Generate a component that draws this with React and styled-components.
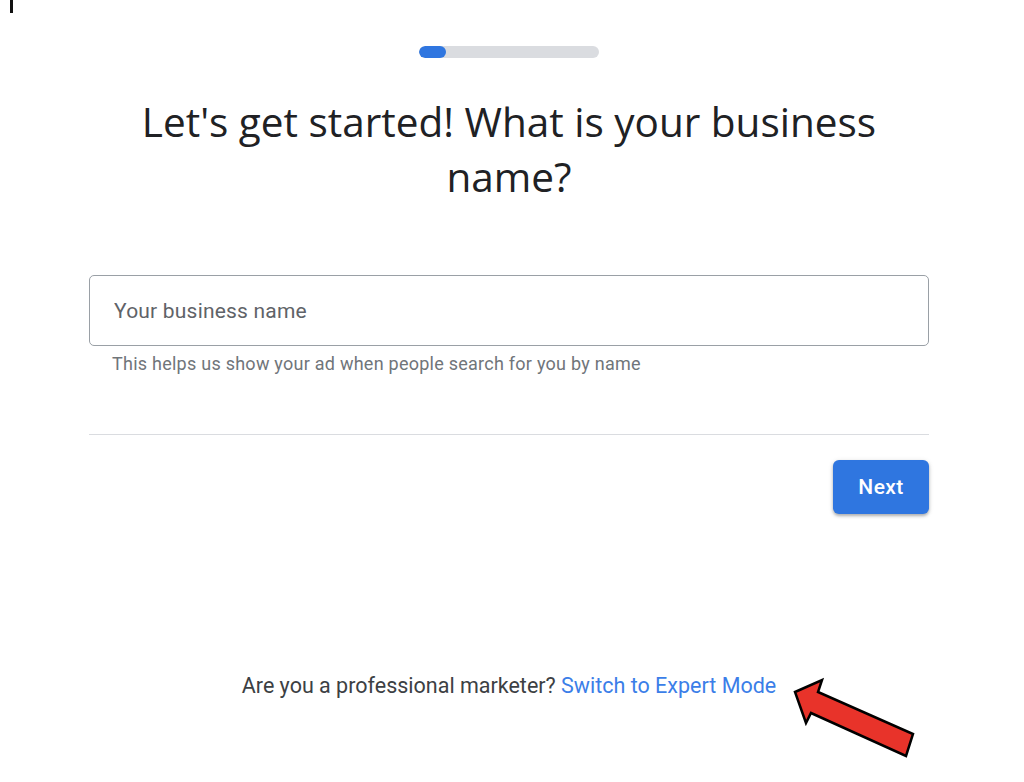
import React from 'react';
import styled, { createGlobalStyle } from 'styled-components';

const GlobalStyle = createGlobalStyle`
  body {
    margin: 0;
    background: #ffffff;
    font-family: Roboto, "Liberation Sans", sans-serif;
  }
`

const Page = styled.div`
  position: relative;
  width: 1024px;
  height: 782px;
  padding-right: 6px;
  box-sizing: border-box;
  overflow: hidden;
`

const Caret = styled.div`
  position: absolute;
  left: 10px;
  top: 0;
  width: 3px;
  height: 13px;
  background: #111;
`

const Main = styled.div`
  width: 840px;
  margin: 0 auto;
  padding-top: 46px;
  display: flex;
  flex-direction: column;
  align-items: center;
`

const Progress = styled.div`
  width: 180px;
  height: 12px;
  border-radius: 6px;
  background: #dadce0;
  overflow: hidden;
`

const ProgressFill = styled.div`
  height: 100%;
  border-radius: 6px;
  background: #2f76e0;
`

const Title = styled.h1`
  margin: 36px 0 0;
  width: 760px;
  text-align: center;
  font-family: "Open Sans", sans-serif;
  font-weight: 400;
  font-size: 40.5px;
  line-height: 55px;
  color: #202124;
`

const Field = styled.div`
  align-self: stretch;
  margin-top: 71px;
`

const Input = styled.input`
  display: block;
  width: 100%;
  height: 71px;
  box-sizing: border-box;
  border: 1.5px solid #9aa0a6;
  border-radius: 5px;
  padding: 0 24px;
  font-family: Roboto, sans-serif;
  font-size: 21px;
  letter-spacing: 0.2px;
  color: #202124;
  outline: none;

  &::placeholder {
    color: #5f6368;
  }
`

const Helper = styled.p`
  margin: 7px 0 0 23px;
  font-size: 18px;
  line-height: 22px;
  color: #70757a;
  letter-spacing: 0.25px;
`

const Divider = styled.hr`
  align-self: stretch;
  margin: 59px 0 0;
  border: none;
  border-top: 1.5px solid #dadce0;
`

const Actions = styled.div`
  align-self: stretch;
  display: flex;
  justify-content: flex-end;
  margin-top: 25px;
`

const Button = styled.button`
  width: 96px;
  height: 54px;
  border: none;
  border-radius: 6px;
  background: #2f76e0;
  color: #fff;
  font-family: Roboto, sans-serif;
  font-weight: 500;
  font-size: 21px;
  letter-spacing: 0.4px;
  box-shadow: 0 2px 3px rgba(60, 64, 67, 0.35), 0 1px 5px rgba(60, 64, 67, 0.15);
  cursor: pointer;
`

const Footer = styled.p`
  margin: 159px 0 0;
  font-size: 21.5px;
  line-height: 26px;
  color: #3c4043;
`

const Link = styled.a`
  color: #3b7ee8;
  text-decoration: none;
`

const Arrow = styled.svg`
  position: absolute;
  left: 0;
  top: 0;
  pointer-events: none;
`

function App() {
  return (
    <Page>
      <GlobalStyle />
      <Caret />
      <Main>
        <Progress>
          <ProgressFill style={{ width: '15%' }} />
        </Progress>
        <Title>Let's get started! What is your business name?</Title>
        <Field>
          <Input placeholder="Your business name" />
          <Helper>This helps us show your ad when people search for you by name</Helper>
        </Field>
        <Divider />
        <Actions>
          <Button>Next</Button>
        </Actions>
        <Footer>
          Are you a professional marketer? <Link href="#">Switch to Expert Mode</Link>
        </Footer>
      </Main>
      <Arrow width="1024" height="782" viewBox="0 0 1024 782">
        <polygon
          points="795,692 822,680 818,692 913,734 906,756 811,713 806,723"
          fill="#e8332a"
          stroke="#000"
          strokeWidth="2.5"
          strokeLinejoin="miter"
        />
      </Arrow>
    </Page>
  );
}

export default App;
